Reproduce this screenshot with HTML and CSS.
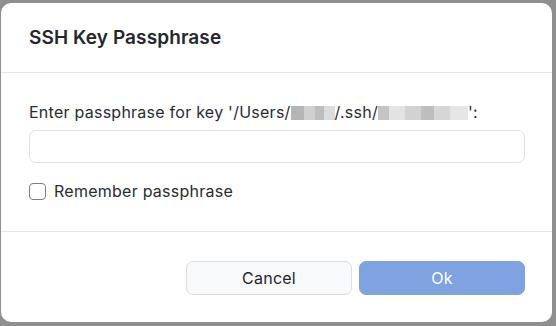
FILE: index.html
```html
<!DOCTYPE html>
<html lang="en">
<head>
    <meta charset="UTF-8">
    <title>SSH Key Passphrase</title>
    <link rel="stylesheet" href="styles.css">
</head>
<body>

<div class="dialog">
    <div class="dialog-header">
        <h1>SSH Key Passphrase</h1>
    </div>

    <div class="dialog-body">
        <!-- Prompt with redacted path parts -->
        <label for="passphrase" class="prompt">Enter passphrase for key '/Users/<span class="redacted user"></span>/.ssh/<span class="redacted key"></span>':</label>
        <input type="password" id="passphrase" name="passphrase">

        <label class="remember">
            <input type="checkbox" id="remember">
            <span>Remember passphrase</span>
        </label>
    </div>

    <div class="dialog-footer">
        <button type="button" class="btn btn-cancel">Cancel</button>
        <button type="button" class="btn btn-ok">Ok</button>
    </div>
</div>

</body>
</html>
```

FILE: styles.css
```css
body {
    font-family: Inter, 'Liberation Sans', Arial, sans-serif;
    background-color: #8f8f8f;
    margin: 0;
    padding: 3px 0 0 1px;
    height: 326px;
    box-sizing: border-box;
    overflow: hidden;
}
.dialog {
    background-color: #ffffff;
    width: 551px;
    height: 319px;
    border-radius: 10px;
    display: flex;
    flex-direction: column;
    box-sizing: border-box;
}
.dialog-header {
    padding: 24px 28px 23px;
    border-bottom: 1px solid #e6e7e9;
}
h1 {
    margin: 0;
    font-size: 19px;
    line-height: 22px;
    font-weight: 600;
    letter-spacing: 0.1px;
    color: #24262a;
}
.dialog-body {
    padding: 29px 27px 30px 28px;
    display: flex;
    flex-direction: column;
    border-bottom: 1px solid #e6e7e9;
}
.prompt {
    font-size: 16px;
    line-height: 20px;
    letter-spacing: 0.25px;
    color: #2a2c30;
    margin-bottom: 8px;
}
.redacted {
    display: inline-block;
    height: 14px;
    vertical-align: -2px;
}
.redacted.user {
    width: 44px;
    background: linear-gradient(90deg, #b5b5b5 0 30%, #d0d0d0 30% 55%, #bdbdbd 55% 75%, #dcdcdc 75%);
}
.redacted.key {
    width: 90px;
    background: linear-gradient(90deg, #c4c4c4 0 12%, #e3e3e3 12% 30%, #d2d2d2 30% 48%, #bebebe 48% 62%, #d6d6d6 62% 80%, #e6e6e6 80%);
}
input[type="password"] {
    height: 33px;
    border: 1px solid #dfe1e5;
    border-radius: 7px;
    padding: 0 10px;
    font-size: 16px;
    box-sizing: border-box;
    outline: none;
}
.remember {
    display: flex;
    align-items: center;
    gap: 8px;
    margin-top: 18px;
    font-size: 16px;
    line-height: 20px;
    letter-spacing: 0.25px;
    color: #2a2c30;
}
.remember input {
    appearance: none;
    width: 17px;
    height: 17px;
    margin: 0;
    border: 1.5px solid #7b7d80;
    border-radius: 4px;
    background-color: #ffffff;
}
.dialog-footer {
    flex: 1;
    display: flex;
    justify-content: flex-end;
    align-items: flex-start;
    gap: 7px;
    padding: 29px 27px 0 0;
}
.btn {
    width: 166px;
    height: 34px;
    border-radius: 7px;
    font-family: inherit;
    font-size: 16px;
    letter-spacing: 0.25px;
    cursor: pointer;
}
.btn-cancel {
    background-color: #f8f9fa;
    border: 1px solid #dcdee2;
    color: #24262a;
}
.btn-ok {
    background-color: #7fa2e0;
    border: 1px solid #7fa2e0;
    color: #ffffff;
}
```
